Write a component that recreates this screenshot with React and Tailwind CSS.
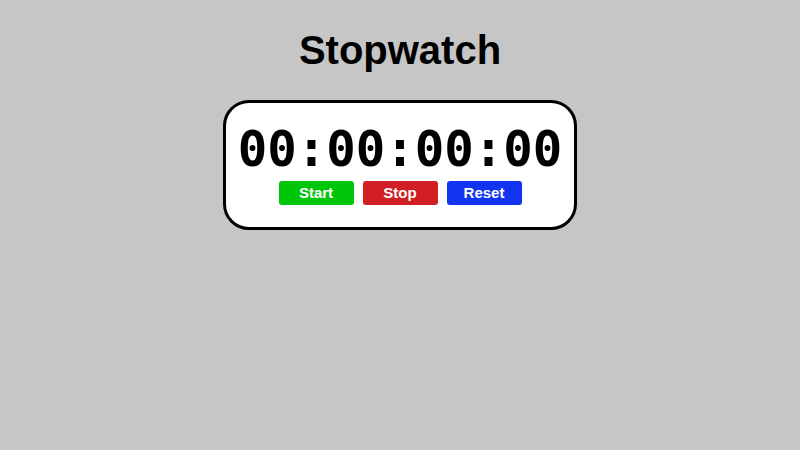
import { useState, useEffect, useRef } from 'react';

const pad = (n) => String(n).padStart(2, '0');

export default function App() {
  const [elapsed, setElapsed] = useState(0);
  const [running, setRunning] = useState(false);
  const timer = useRef(null);

  useEffect(() => {
    if (!running) return;
    const started = Date.now() - elapsed;
    timer.current = setInterval(() => setElapsed(Date.now() - started), 10);
    return () => clearInterval(timer.current);
  }, [running]);

  const hours = Math.floor(elapsed / 3600000);
  const minutes = Math.floor(elapsed / 60000) % 60;
  const seconds = Math.floor(elapsed / 1000) % 60;
  const centis = Math.floor(elapsed / 10) % 100;

  return (
    <div className="min-h-screen bg-[#c6c6c6] flex flex-col items-center font-['Liberation_Sans',Arial,sans-serif]">
      <h1 className="mt-[27px] text-[40px] leading-[46px] font-bold text-black">Stopwatch</h1>
      <div className="mt-[27px] w-[354px] h-[130px] bg-white border-[3px] border-black rounded-[26px] flex flex-col items-center pt-[19px]">
        <div className="font-['DejaVu_Sans_Mono',monospace] font-bold text-[49px] leading-[56px] text-black">
          {pad(hours)}:{pad(minutes)}:{pad(seconds)}:{pad(centis)}
        </div>
        <div className="flex gap-[9px] mt-[3px]">
          <button
            onClick={() => setRunning(true)}
            className="w-[75px] h-[24px] rounded-[3px] bg-[#00c60a] text-white font-bold text-[15px]"
          >
            Start
          </button>
          <button
            onClick={() => setRunning(false)}
            className="w-[75px] h-[24px] rounded-[3px] bg-[#d21f23] text-white font-bold text-[15px]"
          >
            Stop
          </button>
          <button
            onClick={() => {
              setRunning(false);
              setElapsed(0);
            }}
            className="w-[75px] h-[24px] rounded-[3px] bg-[#1233f0] text-white font-bold text-[15px]"
          >
            Reset
          </button>
        </div>
      </div>
    </div>
  );
}
